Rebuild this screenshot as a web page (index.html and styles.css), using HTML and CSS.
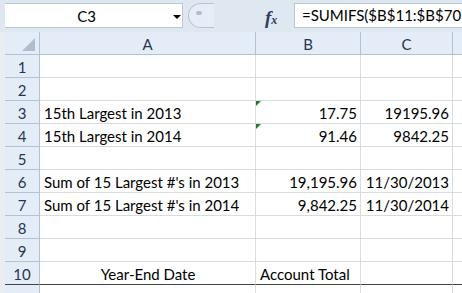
FILE: index.html
```html
<!DOCTYPE html>
<html lang="en">

<head>
    <meta charset="UTF-8">
    <title>Sheet</title>
    <link rel="stylesheet" href="styles.css">
</head>

<body>

    <div class="formula-bar">
        <div class="name-box">
            <span class="name-text">C3</span>
            <span class="drop-arrow"></span>
        </div>
        <div class="bubble"><span class="bubble-dot"></span></div>
        <div class="fx-button"><i>f</i><span class="fx-x">x</span></div>
        <div class="formula-input">=SUMIFS($B$11:$B$70</div>
    </div>

    <div class="sheet">
        <div class="corner"><span class="corner-tri"></span></div>
        <div class="col-head">A</div>
        <div class="col-head">B</div>
        <div class="col-head">C</div>
        <div class="col-head last"></div>

        <div class="row-head">1</div>
        <div class="cell"></div><div class="cell"></div><div class="cell"></div><div class="cell last"></div>

        <div class="row-head">2</div>
        <div class="cell"></div><div class="cell"></div><div class="cell"></div><div class="cell last"></div>

        <div class="row-head">3</div>
        <div class="cell">15th Largest in 2013</div>
        <div class="cell num flagged">17.75</div>
        <div class="cell num">19195.96</div>
        <div class="cell last"></div>

        <div class="row-head">4</div>
        <div class="cell">15th Largest in 2014</div>
        <div class="cell num flagged">91.46</div>
        <div class="cell num">9842.25</div>
        <div class="cell last"></div>

        <div class="row-head">5</div>
        <div class="cell"></div><div class="cell"></div><div class="cell"></div><div class="cell last"></div>

        <div class="row-head">6</div>
        <div class="cell">Sum of 15 Largest #'s in 2013</div>
        <div class="cell num">19,195.96</div>
        <div class="cell num">11/30/2013</div>
        <div class="cell last"></div>

        <div class="row-head">7</div>
        <div class="cell">Sum of 15 Largest #'s in 2014</div>
        <div class="cell num">9,842.25</div>
        <div class="cell num">11/30/2014</div>
        <div class="cell last"></div>

        <div class="row-head">8</div>
        <div class="cell"></div><div class="cell"></div><div class="cell"></div><div class="cell last"></div>

        <div class="row-head">9</div>
        <div class="cell"></div><div class="cell"></div><div class="cell"></div><div class="cell last"></div>

        <div class="row-head total">10</div>
        <div class="cell total center">Year-End Date</div>
        <div class="cell total">Account Total</div>
        <div class="cell total"></div>
        <div class="cell total last"></div>

        <div class="row-head"></div>
        <div class="cell"></div><div class="cell"></div><div class="cell"></div><div class="cell last"></div>
    </div>

</body>

</html>
```

FILE: styles.css
```css
body {
    margin: 0;
    width: 462px;
    height: 293px;
    overflow: hidden;
    background-color: #e9edf2;
    font-family: Lato, "Liberation Sans", sans-serif;
    font-size: 15px;
    color: #000;
}

.formula-bar {
    display: flex;
    height: 32px;
    padding: 3px 0 0 5px;
    box-sizing: border-box;
    background-color: #dfe7f1;
}

.name-box {
    position: relative;
    width: 178px;
    height: 25px;
    background-color: #fff;
    border: 1px solid #b9c7d9;
    border-left: none;
    box-sizing: border-box;
    display: flex;
    align-items: center;
    justify-content: center;
}

.name-text {
    margin-right: 14px;
}

.drop-arrow {
    position: absolute;
    left: 168px;
    top: 11px;
    border-left: 4px solid transparent;
    border-right: 4px solid transparent;
    border-top: 4px solid #000;
}

.bubble {
    width: 26px;
    height: 25px;
    margin-left: 5px;
    border: 1px solid #b6c3d4;
    border-right: none;
    border-radius: 13px 0 0 13px;
    box-sizing: border-box;
    background-color: #e6edf6;
}

.bubble-dot {
    display: block;
    width: 6px;
    height: 4px;
    margin: 7px 0 0 7px;
    border-radius: 2px;
    background-color: #b3bfcd;
}

.fx-button {
    width: 29px;
    margin-left: 51px;
    padding-top: 4px;
    font-family: "Liberation Serif", serif;
    font-size: 19px;
    color: #2d4060;
}

.fx-button i {
    font-weight: bold;
}

.fx-x {
    font-style: italic;
    font-weight: bold;
    font-size: 12px;
}

.formula-input {
    flex: 1;
    height: 25px;
    padding-left: 7px;
    background-color: #fff;
    border: 1px solid #b9c7d9;
    border-right: none;
    box-sizing: border-box;
    line-height: 22px;
    white-space: nowrap;
    overflow: hidden;
}

.sheet {
    display: grid;
    grid-template-columns: 35px 216px 105px 92px 9px;
    grid-auto-rows: 23px;
    margin-left: 5px;
    background-color: #fff;
}

.corner,
.col-head,
.row-head {
    background-color: #e4ecf7;
    color: #27364f;
    border-right: 1px solid #b1c1d6;
    border-bottom: 1px solid #b1c1d6;
    box-sizing: border-box;
}

.corner {
    position: relative;
}

.corner-tri {
    position: absolute;
    right: 4px;
    bottom: 3px;
    border-left: 13px solid transparent;
    border-bottom: 13px solid #aebdd0;
}

.col-head {
    display: flex;
    align-items: center;
    justify-content: center;
    padding-top: 1px;
}

.col-head.last {
    border-right: none;
}

.row-head {
    display: flex;
    align-items: flex-end;
    justify-content: center;
    padding-bottom: 1px;
}

.cell {
    position: relative;
    border-right: 1px solid #d9dcdf;
    border-bottom: 1px solid #d9dcdf;
    box-sizing: border-box;
    display: flex;
    align-items: flex-end;
    padding: 0 3px 1px 4px;
    white-space: nowrap;
}

.cell.last {
    border-right: none;
}

.num {
    justify-content: flex-end;
}

.center {
    justify-content: center;
}

.flagged::before {
    content: "";
    position: absolute;
    left: 0;
    top: 0;
    border-right: 5px solid transparent;
    border-top: 5px solid #1f7a2e;
}

.total {
    border-bottom: 1px solid #444;
}
```
